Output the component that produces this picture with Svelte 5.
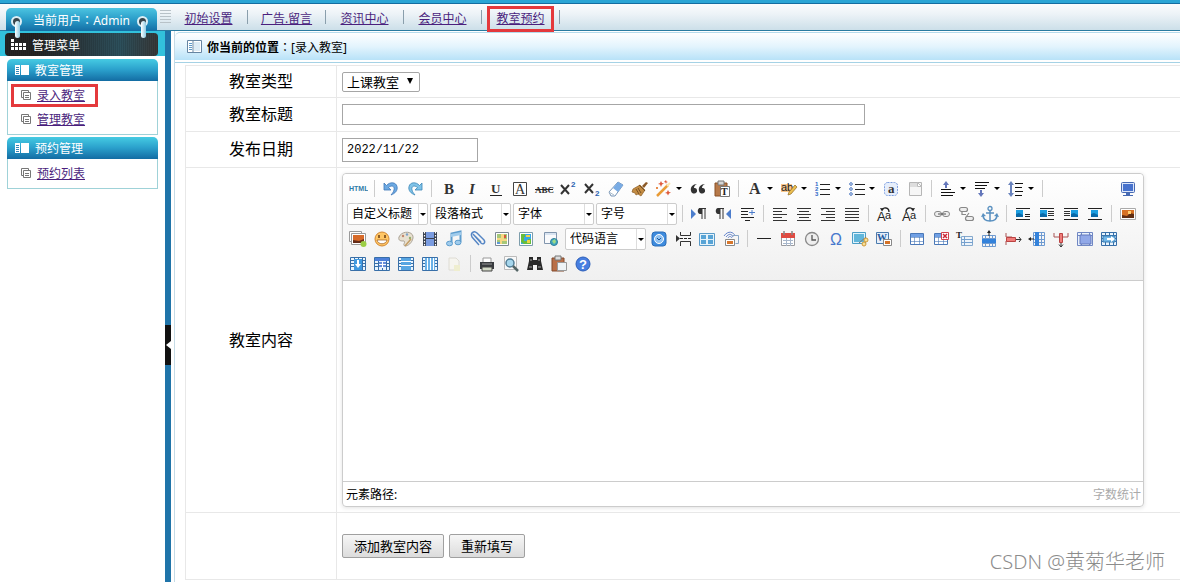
<script>
	let room = '上课教室';
	let title = '';
	let date = '2022/11/22';
	let content = '';
	let collapsed = false;

	const nav = ['初始设置', '广告.留言', '资讯中心', '会员中心', '教室预约'];
	const activeNav = '教室预约';
	const activeItem = '录入教室';

	const menus = [
		{ name: '教室管理', items: ['录入教室', '管理教室'] },
		{ name: '预约管理', items: ['预约列表'] }
	];

	const line = (x, y, w, c = '#222', h = 1) =>
		`<rect x="${x}" y="${y}" width="${w}" height="${h}" fill="${c}"/>`;
	const text = (x, y, size, s, c = '#333', extra = '') =>
		`<text x="${x}" y="${y}" font-size="${size}" fill="${c}" ${extra}>${s}</text>`;
	const serif = 'font-family="Liberation Serif, serif" font-weight="bold"';
	const sans = 'font-family="Liberation Sans, sans-serif"';

	// stack of lines: rows are [x, width]
	const lines = (rows, y = 4, step = 3, c = '#333') =>
		rows.map(([x, w], i) => line(x, y + i * step, w, c)).join('');

	const grid = (c = '#4a78b8', fill = '#fff') =>
		`<path d="M3.500 4.500h13v11h-13z" fill="${fill}" stroke="${c}"/><path d="M3 8.500h14M3 12.500h14M7.500 8v8M12.500 8v8" stroke="${c}" stroke-opacity=".6" fill="none"/><path d="M4 5h12v3H4z" fill="#6f9fe4"/>`;
	const cells = (inner) =>
		`<path d="M2.500 3.500h15v13h-15z" fill="#e9f4fd" stroke="#386fa8"/><path d="M2 6.500h16M2 9.500h16M2 12.500h16M6.500 3v14M10.500 3v14M14.500 3v14" stroke="#386fa8" fill="none"/>${inner}`;
	const floatPic = (x) =>
		line(3, 4, 14) + line(3, 15, 14) +
		`<path d="M${x} 6h7v7h-7z" fill="#1d9ee0"/><path d="M${x} 10l3-1 4 2v2h-7z" fill="#0b6aa8"/>`;

	const icons = {
		html: text(1, 12, 7, 'HTML', '#2e7ba8', sans + ' font-weight="bold"'),
		undo: '<path d="M3 4v7h7L7.500 8.500C11 5.500 14 7.500 13 11c-.500 2-1.500 3-3 5 4-1.500 7-4.500 6-8.500C15 3 9 2.500 5.500 6.500z" fill="#6ca9e2" stroke="#3c76b8" stroke-width=".8"/>',
		redo: '<path d="M17 4v7h-7l2.500-2.500C9 5.500 6 7.500 7 11c.500 2 1.500 3 3 5-4-1.500-7-4.500-6-8.500C5 3 11 2.500 14.500 6.500z" fill="#7fc3e8" stroke="#3c86b8" stroke-width=".8"/>',
		bold: text(6, 15, 15, 'B', '#333', serif),
		italic: text(7, 15, 15, 'I', '#333', serif + ' font-style="italic"'),
		underline: text(5, 14, 13, 'U', '#333', serif) + line(4, 16, 12),
		border: '<path d="M3.500 3.500h13v13h-13z" fill="#fff" stroke="#444"/>' + text(5, 15, 14, 'A', '#333', 'font-family="Liberation Serif, serif"'),
		strike: text(1, 14, 9, 'ABC', '#333', serif) + line(1, 10, 18),
		sup: '<path d="M3 6l8 9M11 6l-8 9" stroke="#333" stroke-width="2" fill="none"/>' + text(13, 8, 8, '2', '#2c62b0', sans + ' font-weight="bold"'),
		sub: '<path d="M3 5l8 9M11 5l-8 9" stroke="#333" stroke-width="2" fill="none"/>' + text(13, 17, 8, '2', '#2c62b0', sans + ' font-weight="bold"'),
		eraser: '<path d="M3 13l9-10 5 3-8 11H5z" fill="#fff" stroke="#7693b5"/><path d="M7 9l5-6 5 3-5 7z" fill="#79ace5"/><path d="M3 13l5 3" stroke="#aabccc"/>',
		brush: '<path d="M12 7l4-4 2 1-4 5z" fill="#8b5a28"/><path d="M3 10l7-4 5 5-4 6-3-2-2 1-1-2-3-1z" fill="#c38c43" stroke="#8d5d25" stroke-width=".7"/><path d="M9 6l6 6M6 10l3 5M8 9l3 5" stroke="#65411c" stroke-width=".8"/>',
		wand: '<path d="M3 17L14 6" stroke="#e99c36" stroke-width="2.500"/><path d="M13 7l3-3" stroke="#fbe7b0" stroke-width="2"/><path d="M7 2l1 2 2 .500-2 1L7 8 6 5.500 4 5l2-1zM14 11l1 2 2 .500-2 1-1 2-1-2-2-.500 2-1zM12 1l.500 1.500L14 3l-1.500.500L12 5l-.500-1.500L10 3z" fill="#df5b3b"/><path d="M2 8h2v2H2z" fill="#e98c4b"/>',
		quote: '<path d="M9 5C5 5 2 8 3 12c1 4 7 3 6-1-.500-2-2-2-3-2 0-2 1-3 3-4zM17 5c-4 0-7 3-6 7 1 4 7 3 6-1-.500-2-2-2-3-2 0-2 1-3 3-4z" fill="#333"/>',
		pastetext: '<path d="M3 4h12v13H3z" fill="#b77949" stroke="#885126"/><path d="M6 2h6v4H6z" fill="#d6d6d6" stroke="#777"/><path d="M8.500 7.500h9v10h-9z" fill="#fff" stroke="#777"/>' + text(9, 16, 10, 'T', '#222', serif),
		color: text(4, 15, 16, 'A', '#333', serif),
		mark: '<path d="M2 5h11v8H2z" fill="#f8c78c"/>' + text(2, 12, 11, 'ab', '#222', sans) + '<path d="M9 16l1-3 6-7 2 2-6 7z" fill="#ecbf50" stroke="#926a24" stroke-width=".7"/>',
		ol: [5, 10, 15].map((y, i) => text(2, y + 2, 6, i + 1, '#2d69c7', sans + ' font-weight="bold"') + line(7, y, 10)).join(''),
		ul: [5, 10, 15].map((y) => `<circle cx="4" cy="${y}" r="1.300" fill="#fff" stroke="#4572be"/>` + line(8, y, 10)).join(''),
		selectall: '<rect x="3.500" y="3.500" width="13" height="13" rx="3" fill="#e6eefb" stroke="#7c9ee0" stroke-dasharray="2 1"/>' + text(7, 14, 13, 'a', '#333', serif),
		page: '<path d="M4.500 3.500h12v13h-12z" fill="#f6f6f6" stroke="#b6b6b6"/><path d="M5 4h7v4H5z" fill="#ddd"/><path d="M12.500 3.500v4h4z" fill="#fff" stroke="#bbb"/>',
		top: '<path d="M8 2l3 4H9v3H7V6H5z" fill="#6477bb"/>' + lines([[3, 10], [3, 14], [3, 12]], 10, 3, '#111'),
		bottom: '<path d="M9 18l3-4h-2v-3H8v3H6z" fill="#6477bb"/>' + lines([[3, 14], [3, 12], [3, 10]], 3, 3, '#111'),
		lineheight: '<path d="M5 2l3 4H6v8h2l-3 4-3-4h2V6H2z" fill="#6983bd"/>' + lines([[9, 8], [9, 7], [9, 8], [9, 7]], 4, 4, '#111'),
		full: '<rect x="3.500" y="3.500" width="13" height="10" rx="1" fill="#dce6fa" stroke="#4669b2"/><path d="M5 5h10v7H5z" fill="#4772cd"/><path d="M8 14h4v2H8zM5 16h10v1H5z" fill="#4669b2"/>',
		ltr: '<path d="M2 5l5 5-5 5z" fill="#4c7dcc"/><path d="M16 4v11M13 4v11M17 4.500h-7" stroke="#333" fill="none"/><path d="M13 4h-2c-3 0-3 6 0 6h2z" fill="#333"/>',
		rtl: '<path d="M18 5l-5 5 5 5z" fill="#4c7dcc"/><path d="M10 4v11M7 4v11M11 4.500H5" stroke="#333" fill="none"/><path d="M7 4H5C2 4 2 10 5 10h2z" fill="#333"/>',
		indent: lines([[4, 13], [4, 7], [4, 7], [4, 13], [8, 5]], 4, 3, '#222') + '<path d="M12 8.500h6M15 6v5" stroke="#4c7dcc"/>',
		left: lines([[3, 14], [3, 9], [3, 14], [3, 9], [3, 14]]),
		center: lines([[3, 14], [5, 10], [3, 14], [5, 10], [3, 14]]),
		right: lines([[3, 14], [8, 9], [3, 14], [8, 9], [3, 14]]),
		justify: lines([[3, 14], [3, 14], [3, 14], [3, 14], [3, 14]]),
		upper: text(2, 17, 13, 'A', '#222', sans) + text(10, 15, 11, 'a', '#222', sans) + '<path d="M14 8c0-5-6-5-7-2" stroke="#222" fill="none" stroke-width="1.300"/><path d="M5 4l4 .500-2 3z" fill="#222"/>',
		lower: text(3, 17, 13, 'A', '#222', sans) + text(11, 15, 11, 'a', '#222', sans) + '<path d="M7 8c0-5 6-5 7-2" stroke="#222" fill="none" stroke-width="1.300"/><path d="M16 4l-4 .500 2 3z" fill="#222"/>',
		link: '<g fill="#eee" stroke="#888"><rect x="2.500" y="7.500" width="7" height="5" rx="2.500"/><rect x="10.500" y="7.500" width="7" height="5" rx="2.500"/><path d="M6 10h8" stroke="#555"/></g>',
		unlink: '<g fill="#eee" stroke="#888" stroke-width="1.200"><rect x="3.500" y="3.500" width="8" height="4" rx="2"/><rect x="9.500" y="12.500" width="8" height="4" rx="2"/><path d="M6 7.500v3h4M10 13l3-4" fill="none"/></g>',
		anchor: '<circle cx="10" cy="4.500" r="2" fill="none" stroke="#5990c0" stroke-width="1.300"/><path d="M10 7v10M6 9h8M3 11c0 5 4 6 7 6s7-1 7-6" fill="none" stroke="#5990c0" stroke-width="1.500"/><path d="M1 13l2-4 3 3zM19 13l-2-4-3 3z" fill="#5990c0"/>',
		picnone: floatPic(3) + line(12, 10, 5) + line(12, 12, 5),
		picleft: floatPic(3) + lines([[11, 6], [11, 6], [11, 6]], 7, 2),
		picright: floatPic(10) + lines([[3, 6], [3, 6], [3, 6]], 7, 2),
		piccenter: floatPic(6),
		image: '<path d="M2.500 4.500h15v11h-15z" fill="#fff" stroke="#aaa"/><path d="M4 6h12v8H4z" fill="#d77124"/><path d="M4 11l5 1 3-3 4 1v4H4z" fill="#602d12"/><path d="M10 7h3v3h-3z" fill="#ffcf70"/>',
		images: '<path d="M1.500 2.500h12v10h-12z" fill="#fff" stroke="#999"/><path d="M3.500 4.500h14v11h-14z" fill="#fff" stroke="#999"/><path d="M5 6h11v8H5z" fill="#d66a29"/><path d="M5 11l6 1 5-2v4H5z" fill="#642b18"/><circle cx="15.500" cy="15" r="3" fill="#9cce45"/>',
		face: '<circle cx="10" cy="10" r="7" fill="#ffc665" stroke="#d38833"/><path d="M7 6v3M13 6v3" stroke="#6b3c12" stroke-width="1.500"/><path d="M5 11c1 5 9 5 10 0z" fill="#fff" stroke="#9c5a1e" stroke-width=".7"/>',
		palette: '<path d="M3 8c3-7 15-6 14 1-1 5-5 8-8 8-3-1 1-4-1-5-3 0-6 0-5-4z" fill="#e8e0d0" stroke="#aaa295"/><circle cx="7" cy="7" r="1.200" fill="#c2876d"/><circle cx="11" cy="5.500" r="1.200" fill="#7ca2c8"/><circle cx="14" cy="9" r="1.200" fill="#91b06c"/><path d="M9 17l6-7" stroke="#c39d65" stroke-width="1.500"/>',
		video: '<path d="M3 3h14v14H3z" fill="#38404f"/><path d="M6 3h8v6H6zM6 10h8v7H6z" fill="#799be0"/><path d="M4.500 3v14M15.500 3v14" stroke="#fff" stroke-width="1.200" stroke-dasharray="1.500 1.500"/>',
		music: '<path d="M7.500 14V4.500l9-2V13" stroke="#5c9ccd" stroke-width="2" fill="none"/><path d="M7 5l10-2v3L7 8z" fill="#9fcbec"/><ellipse cx="5.500" cy="14.500" rx="3" ry="2.300" fill="#9fcbec" stroke="#5c9ccd"/><ellipse cx="14" cy="13.500" rx="3" ry="2.300" fill="#9fcbec" stroke="#5c9ccd"/>',
		attach: '<path d="M5 5l8 9c2 2 5 0 3-3L9 4C6 1 2 4 4 8l7 8M7 7l6 6" fill="none" stroke="#5485c4" stroke-width="1.400"/>',
		map: '<path d="M3.500 3.500h13v13h-13z" fill="#fff" stroke="#7d8994"/><path d="M5 5h10v10H5z" fill="#a6c879"/><path d="M5 9h4V5h3v5h3v2h-5v3H8v-4H5z" fill="#f6d883"/><path d="M12 6h2v3h-2z" fill="#d7573c"/><path d="M5 13h3v2H5z" fill="#5d99d5"/>',
		gmap: '<path d="M3.500 3.500h13v13h-13z" fill="#fff" stroke="#7d9dac"/><path d="M5 5h10v10H5z" fill="#36a7e5"/><path d="M5 5h4v3H8v4h4v-2h3v5H8l-3-2z" fill="#67bd3d"/><path d="M10 6h4v2h-4zM11 11h3v3h-3z" fill="#efd445"/>',
		frame: '<path d="M4.500 3.500h12v11h-12z" fill="#f9fafc" stroke="#8195ad"/><path d="M5 4h11v2H5z" fill="#d9e4f1"/><circle cx="14" cy="13" r="3.500" fill="#43a7bf" stroke="#2c7f9c"/><path d="M12 12l3-2 1 3-2 2z" fill="#9edb85"/>',
		webapp: '<rect x="3" y="3" width="14" height="14" rx="3" fill="#3d8bde" stroke="#2b6db8"/><circle cx="10" cy="10" r="4.500" fill="#8fc1f2" stroke="#fff"/><path d="M8 9l2 2 2-2" stroke="#195598" fill="none"/>',
		pagebreak: line(7, 9, 3) + line(11, 9, 3) + line(15, 9, 3) + '<path d="M3 6l4 3.500-4 3.500z" fill="#333"/><path d="M7.500 3v3.500h10V3M7.500 17v-4.500h10V17" fill="none" stroke="#333"/>',
		template: '<path d="M2.500 4.500h15v12h-15z" fill="#e6f3fa" stroke="#5a9bc8"/><path d="M4 6h5v4H4zM11 6h5v4h-5zM4 11h5v4H4zM11 11h5v4h-5z" fill="#58a4d6"/>',
		background: '<path d="M3 7c4-6 10-4 11 0M5 8c3-4 6-3 7 0M7 9c1-2 3-2 4 0" fill="none" stroke="#6484cc"/><path d="M4.500 10.500h9v6h-9z" fill="#fff" stroke="#888"/><path d="M6 12h6v3H6z" fill="#d7772d"/><path d="M11.500 6.500h6v8h-3" fill="none" stroke="#8ba7c7"/>',
		rule: line(3, 9, 14),
		calendar: '<path d="M3.500 4.500h13v12h-13z" fill="#fff" stroke="#9b9ca0"/><path d="M3 4h14v5H3z" fill="#df4b42"/><path d="M6 2v4M14 2v4" stroke="#888" stroke-width="1.500"/><path d="M5 11.500h10M5 14.500h10M8.500 9v8M12.500 9v8" stroke="#a8b7cb"/>',
		clock: '<circle cx="10" cy="10" r="6.500" fill="#eee" stroke="#888" stroke-width="1.300"/><path d="M10 6v5h4" fill="none" stroke="#555" stroke-width="1.300"/>',
		omega: text(4, 16, 16, 'Ω', '#4778cd', sans),
		screenshot: '<path d="M2.500 3.500h13v11h-13z" fill="#dff3fc" stroke="#4c9ec6"/><path d="M4 5h10v8H4z" fill="#61b6da"/><path d="M9 14l7-6" stroke="#777"/><circle cx="14" cy="15" r="2" fill="#f6df9b" stroke="#d09936"/><circle cx="16" cy="11" r="2" fill="#f6df9b" stroke="#d09936"/>',
		word: '<path d="M2.500 3.500h12v11h-12z" fill="#e6effa" stroke="#4b7bad"/>' + text(3, 12, 10, 'W', '#245aa0', serif) + '<path d="M9.500 10.500h8v6h-8z" fill="#fff" stroke="#888"/><path d="M11 12h5v3h-5z" fill="#d47227"/>',
		table: grid(),
		deltable: grid() + '<path d="M10.500 3.500h7v7h-7z" fill="#fff" stroke="#d1424e"/><path d="M12 5l4 4M16 5l-4 4" stroke="#cb2636" stroke-width="1.500"/>',
		titlecell: text(1, 9, 9, 'T', '#222', serif) + '<path d="M6.500 7.500h11v9h-11z" fill="#edf4fb" stroke="#85a9cd"/><path d="M6 10.500h12M6 13.500h12M9.500 7v10" stroke="#75a0ce"/>',
		rowabove: '<path d="M3.500 6.500h13v11h-13zM3 9.500h14M3 14.500h14M6.500 6v12M10.500 6v12M13.500 6v12" fill="none" stroke="#6f9bd1"/><path d="M3 10h14v4H3z" fill="#3382db"/><path d="M10 1l2 3H8zM9.500 3h1v4h-1z" fill="#222"/>',
		delrow: '<path d="M3 4v4h6M3 16v-4h6" fill="none" stroke="#a95454"/><path d="M3.500 8.500h9v4h-9z" fill="#ef7c7a" stroke="#bb4342"/><path d="M13 10.500h5M16 8l2 2.500-2 2.500" fill="none" stroke="#333"/>',
		colleft: '<path d="M6.500 3.500h11v13h-11zM6 6.500h12M6 10.500h12M6 13.500h12M14.500 3v14" fill="none" stroke="#6f9bd1"/><path d="M8 3h4v14H8z" fill="#3382db"/><path d="M1 10l3-2v4zM3 9.500h4v1H3z" fill="#222"/>',
		delcol: '<path d="M3 4v4h5M17 4v4h-5" fill="none" stroke="#a95454"/><path d="M8.500 4.500h3v9h-3z" fill="#ef7c7a" stroke="#bb4342"/><path d="M10 14v4M8 15.500l2 2.500 2-2.500" fill="none" stroke="#333"/>',
		merge: '<path d="M2.500 3.500h15v13h-15zM2 6.500h16M6.500 3v14M14.500 3v14" fill="#e9f1fc" stroke="#7087c3"/><path d="M5 6h11v9H5z" fill="#91a8e8" stroke="#6279bd"/>',
		mergeright: cells('<path d="M4 7h12v6H4z" fill="#74b8e8" stroke="#387fb5"/><path d="M8 9h4V7l4 3-4 3v-2H8z" fill="#fff"/>'),
		mergedown: cells('<path d="M6 5h8v11H6z" fill="#419ae0"/><path d="M9 6h2v4h2l-3 4-3-4h2z" fill="#fff"/>'),
		splitcell: cells('<path d="M3 4h14v3H3z" fill="#4c80da"/><path d="M7 8h7v5H7z" fill="#688fda"/><path d="M10.500 7v7M7 10.500h7" stroke="#fff"/>'),
		splitrow: cells('<path d="M5 4h10v12H5z" fill="#56a5e2"/><path d="M5 7.500h10M5 11.500h10" stroke="#fff"/>'),
		splitcol: cells('<path d="M5 4h10v12H5z" fill="#69b1e8"/><path d="M7.500 4v12M10.500 4v12M13.500 4v12" stroke="#fff"/>'),
		chart: '<path d="M5 4h7l3 3v9H5z" fill="#f6f5ef" stroke="#dedcd4"/><path d="M10 11h6v6h-6z" fill="#efeecf"/>',
		print: '<path d="M6 4h8v5H6z" fill="#fff" stroke="#999"/><path d="M3 8h14v7H3z" fill="#383b3e"/><path d="M5 10h10" stroke="#999"/><path d="M5 13h10v4H5z" fill="#d3dac7" stroke="#444"/>',
		preview: '<path d="M3.500 2.500h12v13h-12z" fill="#f9f9f9" stroke="#bbb"/><circle cx="9" cy="9" r="4" fill="#a7d7ed" stroke="#527d95" stroke-width="1.500"/><path d="M12 12l5 5" stroke="#566" stroke-width="2.500"/>',
		search: '<path d="M4 3h4v3h4V3h4v4l2 9h-6v-5H8v5H2l2-9z" fill="#292929"/><path d="M4 13h3M13 13h3M5 6h2M13 6h2" stroke="#aaa"/>',
		paste: '<path d="M3 4h12v13H3z" fill="#b96f48" stroke="#814a2c"/><path d="M6 2h6v4H6z" fill="#ddd" stroke="#777"/><path d="M8.500 8.500h9v8h-9z" fill="#eef3f6" stroke="#999"/>',
		help: '<circle cx="10" cy="10" r="7" fill="#477ee0" stroke="#2b5eb9"/>' + text(6, 15, 13, '?', '#fff', sans + ' font-weight="bold"')
	};

	// "|" is a separator, a leading ":" a drop-down, a trailing "+" a button with an arrow
	const toolbar = [
		'html | undo redo | bold italic underline border strike sup sub eraser brush wand+ quote pastetext | color+ mark+ ol+ ul+ selectall page | top+ bottom+ lineheight+ | > full',
		':自定义标题 :段落格式 :字体 :字号 | ltr rtl indent | left center right justify | upper lower | link unlink anchor | picnone picleft picright piccenter | image',
		'images face palette video music attach map gmap frame :代码语言 webapp pagebreak template background | rule calendar clock omega screenshot word | table deltable titlecell rowabove delrow colleft delcol merge mergeright',
		'mergedown splitcell splitrow splitcol chart | print preview search paste help'
	].map((row) => row.split(' '));

	function reset() {
		room = '上课教室';
		title = '';
		date = '2022/11/22';
		content = '';
	}
</script>

<div class="page">
	<header class="topbar">
		<div class="user">
			<span class="pin"></span>
			当前用户<span class="colon">：</span>Admin
			<span class="pin right"></span>
		</div>
		<span class="grip"></span>
		<nav>
			{#each nav as item}
				<span class="nav-cell"><a href="#nav" class:marked={item === activeNav}>{item}</a></span>
			{/each}
		</nav>
	</header>

	<div class="body">
		{#if !collapsed}
			<aside>
				<div class="strip">
					<div class="menu-title">
						<svg width="16" height="12" viewBox="0 0 16 12" fill="#fff">
							<path d="M0 0h3v3H0zM0 4h3v3H0zM4 4h3v3H4zM8 4h3v3H8zM12 4h3v3h-3zM0 8h3v3H0zM4 8h3v3H4zM8 8h3v3H8zM12 8h3v3h-3z" />
						</svg>
						管理菜单
					</div>
				</div>
				{#each menus as menu}
					<section class="menu">
						<h2>
							<svg width="14" height="12" viewBox="0 0 14 12">
								<path d="M0 1h5v10H0zM6 1h8v10H6z" fill="#fff" />
								<path d="M1 3.500h3M1 5.500h3M1 7.500h3M1 9.500h3" stroke="#3787b8" />
							</svg>
							{menu.name}
						</h2>
						<ul>
							{#each menu.items as item}
								<li>
									<span class="item" class:marked={item === activeItem}>
										<svg width="11" height="11" viewBox="0 0 11 11" fill="#fff" stroke="#777">
											<path d="M.5 .5h7v7h-7z" />
											<path d="M2.500 2.500h7v7h-7zM4 5.500h4M4 7.500h4" />
										</svg>
										<a href="#menu">{item}</a>
									</span>
								</li>
							{/each}
						</ul>
					</section>
				{/each}
			</aside>
		{/if}

		<div class="divider">
			<button class="handle" aria-label="收起菜单" on:click={() => (collapsed = !collapsed)}></button>
		</div>

		<main>
			<div class="crumb-wrap">
				<div class="crumb">
					<svg width="15" height="13" viewBox="0 0 15 13">
						<path d="M.5 .5h14v12H.5z" fill="#fff" stroke="#6685a2" />
						<path d="M6 1v11" stroke="#6685a2" />
						<path d="M2 3.500h3M2 5.500h3M2 7.500h3M2 9.500h3" stroke="#5f99c7" />
						<path d="M7 2h6v9H7z" fill="#dcebf5" />
					</svg>
					<b>你当前的位置</b><span class="colon">：</span>[录入教室]
				</div>
			</div>

			<form on:submit|preventDefault>
				<div class="row">
					<label for="room">教室类型</label>
					<div class="field">
						<span class="room">
							<select id="room" bind:value={room}>
								<option>上课教室</option>
							</select>
						</span>
					</div>
				</div>
				<div class="row medium">
					<label for="title">教室标题</label>
					<div class="field"><input id="title" type="text" bind:value={title} /></div>
				</div>
				<div class="row large">
					<label for="date">发布日期</label>
					<div class="field"><input id="date" type="text" bind:value={date} /></div>
				</div>
				<div class="row">
					<label for="content">教室内容</label>
					<div class="field editor-field">
						<div class="editor">
							<div class="toolbar">
								{#each toolbar as row}
									<div class="tools">
										{#each row as tool}
											{#if tool === '|'}
												<span class="sep"></span>
											{:else if tool === '>'}
												<span class="fill"></span>
											{:else if tool[0] === ':'}
												<span class="combo">
													<select aria-label={tool.slice(1)}>
														<option>{tool.slice(1)}</option>
													</select>
												</span>
											{:else}
												<button type="button" class="tool" class:drop={tool.endsWith('+')} aria-label={tool.replace('+', '')}>
													<svg width="20" height="20" viewBox="0 0 20 20">{@html icons[tool.replace('+', '')]}</svg>
												</button>
											{/if}
										{/each}
									</div>
								{/each}
							</div>
							<textarea id="content" bind:value={content}></textarea>
							<div class="status">
								<span>元素路径:</span>
								<span class="count">字数统计</span>
							</div>
						</div>
					</div>
				</div>
				<div class="row actions">
					<div class="label"></div>
					<div class="field">
						<button type="submit" class="btn">添加教室内容</button>
						<button type="button" class="btn" on:click={reset}>重新填写</button>
					</div>
				</div>
			</form>
		</main>
	</div>

	<div class="watermark">CSDN @黄菊华老师</div>
</div>

<style>
	:global(body) {
		margin: 0;
		background: #fff;
	}

	.page {
		position: relative;
		display: flex;
		flex-direction: column;
		min-height: 100vh;
		overflow: hidden;
		font-family: 'Noto Sans', 'Noto Sans CJK SC', sans-serif;
		font-size: 12px;
		color: #000;
	}

	.page * {
		box-sizing: border-box;
	}

	select,
	input,
	textarea,
	button {
		font-family: inherit;
		color: inherit;
		margin: 0;
	}

	svg {
		display: block;
		flex: none;
	}

	a {
		color: #4b1f7d;
	}

	.colon {
		font-family: 'Noto Sans CJK TC', sans-serif;
	}

	.marked {
		outline: 3px solid #e4393c;
	}

	/* top bar */
	.topbar {
		display: flex;
		height: 31px;
		padding-left: 6px;
		border-top: 3px solid #2aa5d5;
		border-bottom: 1px solid #2a7ba0;
		background: linear-gradient(#146da0 1px, #fafcfd 1px, #edf3f7 40%, #ccdfe9);
	}

	.user {
		position: relative;
		width: 151px;
		height: 23px;
		margin-top: 5px;
		border-radius: 5px 5px 0 0;
		background: linear-gradient(#4cc4e1, #2a9cc8 50%, #146ea5);
		color: #fff;
		line-height: 24px;
		text-align: center;
		white-space: nowrap;
	}

	.pin {
		position: absolute;
		z-index: 1;
		left: 5px;
		top: 8px;
		width: 11px;
		height: 11px;
		border: 2px solid #dceef5;
		border-radius: 50%;
		background: #38454c;
	}

	.pin::after {
		content: '';
		position: absolute;
		left: 2px;
		top: 3px;
		width: 5px;
		height: 17px;
		border-radius: 3px;
		background: linear-gradient(90deg, #fff, #8fcbe3);
	}

	.pin.right {
		left: auto;
		right: 9px;
	}

	.grip {
		width: 11px;
		height: 14px;
		margin: 7px 0 0 3px;
		background: repeating-linear-gradient(#b8c2c8 0 1px, transparent 1px 3px);
	}

	nav {
		display: flex;
		align-items: center;
		margin-left: -1px;
	}

	.nav-cell {
		display: flex;
		align-items: center;
		justify-content: center;
		width: 78px;
		height: 14px;
		border-right: 1px solid #8a9fac;
		white-space: nowrap;
	}

	.nav-cell a {
		padding: 0 6px;
		line-height: 20px;
		margin-top: 4px;
	}

	/* side menu */
	.body {
		display: flex;
		flex: 1;
	}

	aside {
		flex: none;
		width: 165px;
	}

	.strip {
		padding: 2px 7px 0 5px;
		background: #32c1dc;
	}

	.menu-title {
		display: flex;
		align-items: center;
		gap: 5px;
		height: 23px;
		padding-left: 6px;
		border-radius: 4px;
		background:
			repeating-linear-gradient(90deg, rgba(0, 0, 0, 0.1) 0 1px, transparent 1px 2px),
			linear-gradient(90deg, #242424 20%, #2b3a40 50%, #2c505c 75%, #383838);
		color: #fff;
	}

	.menu {
		margin: 3px 7px 0;
	}

	.menu + .menu {
		margin-top: 2px;
	}

	h2 {
		display: flex;
		align-items: center;
		gap: 6px;
		height: 22px;
		margin: 0;
		padding-left: 8px;
		border-radius: 5px 5px 0 0;
		background: linear-gradient(#45cbe3, #2a9fcb 50%, #136ca3);
		color: #fff;
		font-size: 12px;
		font-weight: 400;
	}

	ul {
		margin: 0;
		padding: 2px 0 3px;
		border: 1px solid #9fd2d8;
		border-top: 0;
		list-style: none;
	}

	li {
		display: flex;
		align-items: center;
		height: 24px;
		padding-left: 6px;
	}

	.item {
		display: flex;
		align-items: center;
		gap: 5px;
		width: 81px;
		height: 17px;
		padding-left: 7px;
		line-height: 17px;
	}

	.divider {
		display: flex;
		align-items: center;
		flex: none;
		width: 6px;
		padding-top: 77px;
		background: #1f74a9;
	}

	.handle {
		width: 6px;
		height: 40px;
		padding: 0;
		border: 0;
		background: #111;
	}

	.handle::before {
		content: '';
		display: block;
		border: 4px solid transparent;
		border-left: 0;
		border-right: 5px solid #fff;
	}

	/* content */
	main {
		flex: 1;
		min-width: 0;
		margin-left: 3px;
		border-left: 1px solid #c5dbe6;
	}

	.crumb-wrap {
		padding: 1px 0 2px;
		border-bottom: 1px solid #a5d2e5;
	}

	.crumb {
		display: flex;
		align-items: center;
		height: 28px;
		padding-left: 12px;
		border-top: 1px solid #b5dbec;
		border-top-left-radius: 5px;
		background: linear-gradient(#fff, #e3f4fd 50%, #b8e2f8);
	}

	.crumb svg {
		margin-right: 5px;
	}

	form {
		margin: 2px 0 0 10px;
		border-top: 1px solid #e8e8e8;
		border-left: 1px solid #e8e8e8;
	}

	.row {
		display: flex;
		min-height: 32px;
		border-bottom: 1px solid #e8e8e8;
	}

	.row.medium {
		min-height: 34px;
	}

	.row.large {
		min-height: 36px;
	}

	.row.actions {
		min-height: 67px;
	}

	label,
	.label {
		display: flex;
		align-items: center;
		justify-content: center;
		flex: none;
		width: 151px;
		padding-bottom: 1px;
		border-right: 1px solid #e8e8e8;
		font-size: 16px;
		line-height: 22px;
	}

	.field {
		display: flex;
		align-items: center;
		flex: 1;
		gap: 5px;
		min-width: 0;
		padding-left: 5px;
	}

	.room,
	.combo {
		position: relative;
		flex: none;
	}

	.room select,
	.combo select {
		display: block;
		appearance: none;
		background: #fff;
	}

	.room select {
		width: 78px;
		height: 20px;
		padding: 0 4px;
		border: 1px solid #a6a6a6;
		border-radius: 2px;
		font-size: 13px;
	}

	.room::after {
		content: '';
		position: absolute;
		right: 7px;
		top: 6px;
		border: 3px solid transparent;
		border-top: 6px solid #000;
		border-bottom: 0;
		pointer-events: none;
	}

	input {
		height: 21px;
		padding: 0 4px;
		border: 1px solid #a6a6a6;
		font-family: 'Liberation Mono', monospace;
		font-size: 12px;
	}

	#title {
		width: 100%;
		max-width: 523px;
	}

	#date {
		width: 136px;
		height: 24px;
	}

	.editor-field {
		padding: 5px 36px 5px 5px;
	}

	.editor {
		width: 100%;
		max-width: 802px;
		border: 1px solid #ccc;
		border-radius: 4px;
		box-shadow: 0 1px 4px rgba(0, 0, 0, 0.12);
	}

	.toolbar {
		padding: 2px 3px 4px;
		border-bottom: 1px solid #ccc;
		border-radius: 4px 4px 0 0;
		background: linear-gradient(#fff, #f0f0f0);
	}

	.tools {
		display: flex;
		align-items: center;
		height: 25px;
	}

	.tool {
		display: flex;
		align-items: center;
		flex: none;
		width: 24px;
		height: 22px;
		padding: 0 2px;
		border: 0;
		background: none;
	}

	.tool.drop {
		width: 34px;
	}

	.tool.drop::after {
		content: '';
		margin-left: 2px;
		border: 3px solid transparent;
		border-top-color: #000;
		border-bottom: 0;
	}

	.sep {
		flex: none;
		width: 1px;
		height: 17px;
		margin: 0 4px;
		background: #ccc;
	}

	.fill {
		flex: 1;
	}

	.combo {
		margin: 0 1px;
	}

	.tool + .combo {
		margin-left: 3px;
	}

	.combo select {
		width: 81px;
		height: 22px;
		padding: 0 4px;
		border: 1px solid #ccc;
		border-radius: 2px;
		font-size: 12px;
	}

	.combo::after {
		content: '';
		position: absolute;
		right: 2px;
		top: 10px;
		border: 3px solid transparent;
		border-top-color: #000;
		border-bottom: 0;
		pointer-events: none;
	}

	.combo::before {
		content: '';
		position: absolute;
		right: 9px;
		top: 1px;
		width: 1px;
		height: 20px;
		background: #ddd;
	}

	textarea {
		display: block;
		width: 100%;
		height: 200px;
		padding: 8px;
		border: 0;
		resize: none;
		outline: none;
		font-size: 16px;
	}

	.status {
		display: flex;
		align-items: center;
		justify-content: space-between;
		height: 25px;
		padding: 0 2px 0 3px;
		border-top: 1px solid #ccc;
	}

	.count {
		color: #aaa;
	}

	.btn {
		height: 24px;
		padding: 0 11px;
		border: 1px solid #a0a0a0;
		border-radius: 2px;
		background: linear-gradient(#f6f6f6, #dcdcdc);
		font-size: 13px;
		line-height: 20px;
		white-space: nowrap;
	}

	.watermark {
		position: absolute;
		right: 15px;
		bottom: 7px;
		color: #8c8c8c;
		font-size: 20px;
		font-weight: 300;
		line-height: 26px;
		pointer-events: none;
	}
</style>
